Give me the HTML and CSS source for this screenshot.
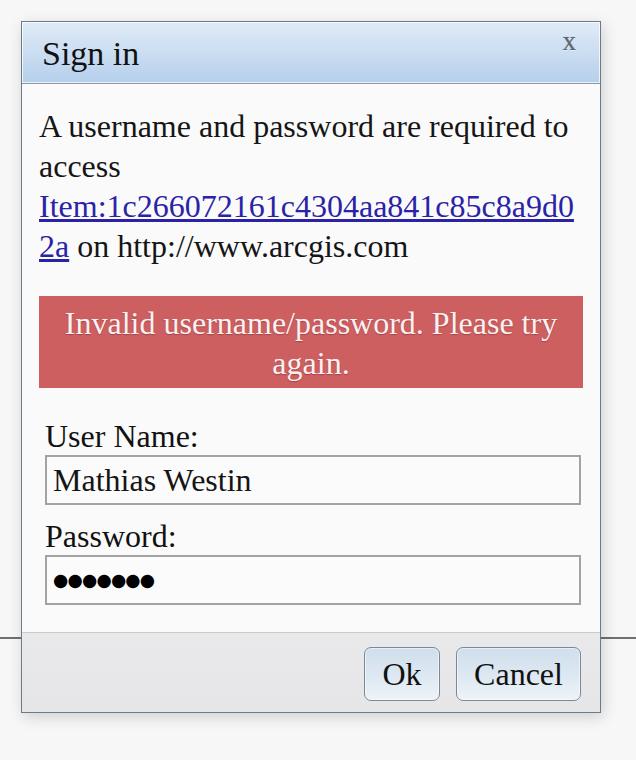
FILE: index.html
```html
<!DOCTYPE html>
<html lang="en">
<head>
<meta charset="utf-8">
<title>Sign in</title>
<link rel="stylesheet" href="styles.css">
</head>
<body>
<div class="page">
  <div class="dialog">
    <div class="titlebar">
      <span class="title">Sign in</span>
      <span class="close">x</span>
    </div>
    <div class="content">
      <p class="message">A username and password are required to access <a class="link" href="#">Item:1c266072161c4304aa841c85c8a9d02a</a> on http://www.arcgis.com</p>
      <div class="error">Invalid username/password. Please try again.</div>
      <div class="form">
        <div class="label">User Name:</div>
        <div class="field">Mathias Westin</div>
        <div class="label label-next">Password:</div>
        <div class="field field-pass">●●●●●●●</div>
      </div>
    </div>
    <div class="footer">
      <button class="btn btn-ok">Ok</button>
      <button class="btn btn-cancel">Cancel</button>
    </div>
  </div>
</div>
</body>
</html>
```

FILE: styles.css
```css
html, body {
  margin: 0;
  padding: 0;
}
body {
  width: 636px;
  height: 760px;
  background-color: #f7f7f7;
  background-image: linear-gradient(to bottom, transparent 637px, #707070 637px, #707070 639px, transparent 639px);
  font-family: "Liberation Serif", "Times New Roman", serif;
  color: #151515;
  overflow: hidden;
}
.page {
  padding: 21px 0 0 21px;
}
.dialog {
  width: 578px;
  border: 1px solid #6a7c8c;
  background: #fafafa;
  box-shadow: 2px 4px 14px rgba(0, 0, 0, 0.16);
}
.titlebar {
  display: flex;
  justify-content: space-between;
  align-items: flex-start;
  height: 58px;
  padding: 3px 24px 0 20px;
  background: linear-gradient(to bottom, #e0ebf7 0%, #cddff2 45%, #b5cfec 100%);
  box-shadow: inset 0 0 0 1px rgba(255, 255, 255, 0.75);
  border-bottom: 1px solid #8597a8;
}
.title {
  font-size: 34px;
  line-height: 58px;
  color: #111;
}
.close {
  font-size: 27px;
  line-height: 22px;
  margin-top: 5px;
  color: #5c6874;
  text-shadow: 0 0 1px rgba(90, 100, 115, 0.6), 0 1px 0 rgba(255, 255, 255, 0.7);
}
.content {
  padding: 22px 17px 27px 17px;
}
.message {
  margin: 0;
  font-size: 32px;
  line-height: 40px;
  overflow-wrap: break-word;
  word-wrap: break-word;
}
.link {
  color: #2b23a6;
  text-decoration: underline;
}
.error {
  margin-top: 30px;
  padding: 7px 0 5px;
  background: #cd5f61;
  color: #fbf1f1;
  font-size: 32px;
  line-height: 40px;
  text-align: center;
  text-shadow: 0 1px 1px rgba(90, 20, 20, 0.35);
}
.form {
  margin-top: 29px;
  padding: 0 2px 0 6px;
}
.label {
  font-size: 32px;
  line-height: 38px;
  color: #111;
}
.label-next {
  margin-top: 12px;
}
.field {
  height: 46px;
  border: 2px solid #a3a3a3;
  background: #fbfbfb;
  padding: 0 0 0 6px;
  font-size: 32px;
  line-height: 50px;
  box-sizing: content-box;
  display: flex;
  align-items: center;
}
.field-pass {
  font-family: "DejaVu Sans", sans-serif;
  font-size: 17.5px;
  letter-spacing: -0.8px;
  color: #000;
  padding-left: 6px;
}
.footer {
  display: flex;
  justify-content: flex-end;
  gap: 16px;
  height: 65px;
  padding: 14px 19px 0 0;
  border-top: 1px solid #cbcbcb;
  background: linear-gradient(to bottom, #e9e8ea, #e6e6e8);
}
.btn {
  height: 54px;
  border: 1px solid #7b8896;
  border-radius: 7px;
  background: linear-gradient(to bottom, #cfdfec 0%, #dce7f1 50%, #eef3f8 100%);
  box-shadow: inset 0 0 0 1px rgba(255, 255, 255, 0.5);
  font-family: "Liberation Serif", "Times New Roman", serif;
  font-size: 32px;
  color: #111;
  padding: 0;
  margin: 0;
}
.btn-ok {
  width: 76px;
}
.btn-cancel {
  width: 125px;
}
```
